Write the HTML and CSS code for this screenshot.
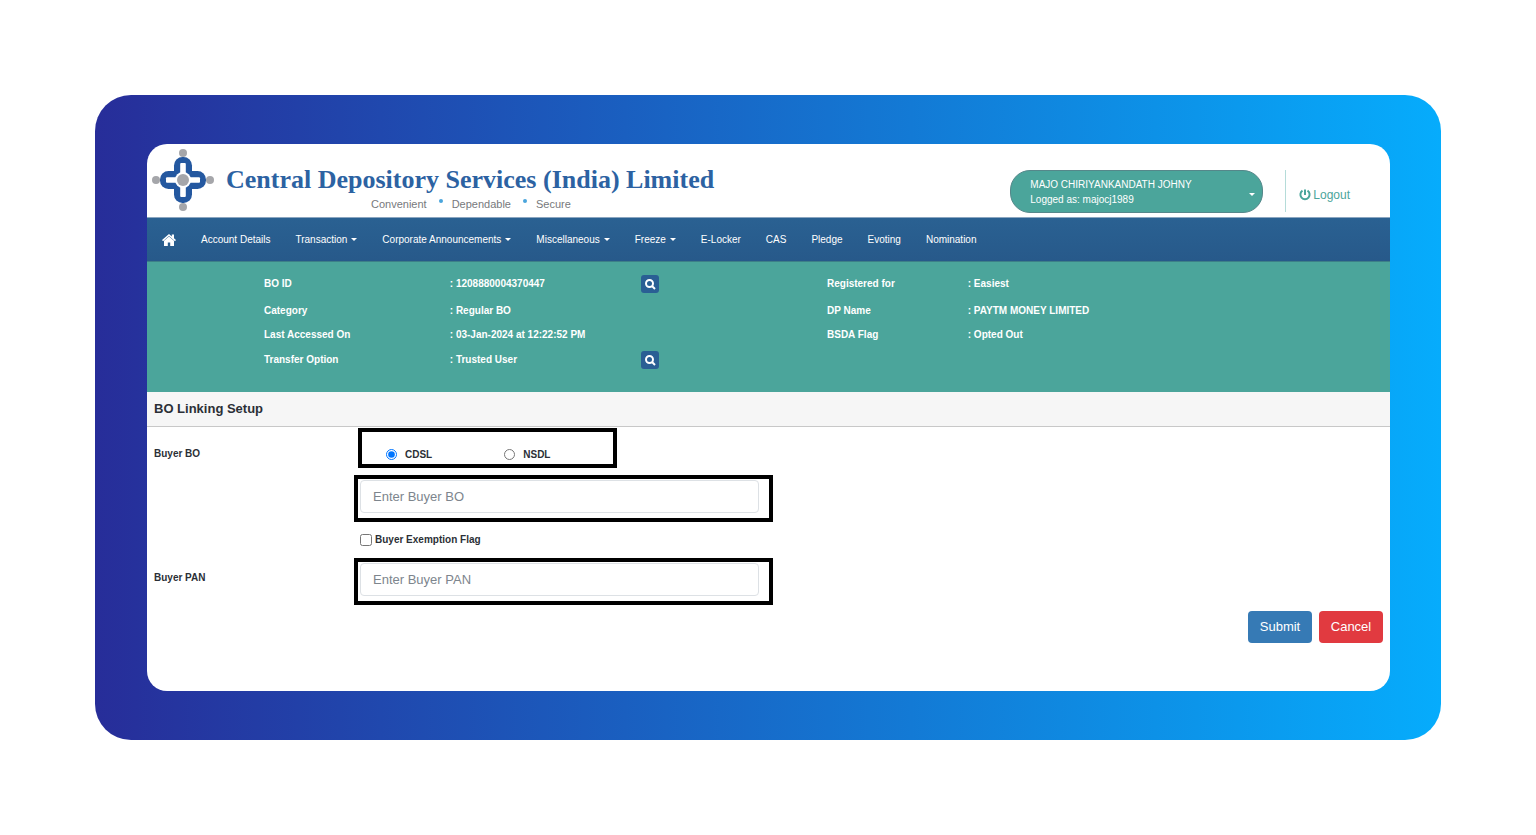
FILE: index.html
```html
<!DOCTYPE html>
<html lang="en">
<head>
    <meta charset="UTF-8">
    <meta name="viewport" content="width=device-width, initial-scale=1.0">
    <title>BO Linking Setup</title>
    <link rel="stylesheet" href="styles.css">
</head>
<body>
<div class="frame">
    <div class="card">
        <header class="header">
            <svg class="logo" viewBox="-32 -32 64 64" aria-hidden="true">
                <g fill="#2458a0">
                    <rect x="-9" y="-23" width="18" height="46" rx="8.500"/>
                    <rect x="-23" y="-9" width="46" height="18" rx="8.500"/>
                    <circle r="12.500"/>
                </g>
                <g fill="#fff">
                    <rect x="-2.800" y="-17" width="5.600" height="34" rx="1"/>
                    <rect x="-17" y="-2.800" width="34" height="5.600" rx="1"/>
                    <circle r="8"/>
                </g>
                <g fill="#a5a6aa">
                    <circle r="6"/>
                    <circle cx="-27" r="4"/>
                    <circle cx="27" r="4"/>
                    <circle cy="-27" r="4"/>
                    <circle cy="27" r="4"/>
                </g>
            </svg>
            <div class="brand">
                <div class="brand-name">Central Depository Services (India) Limited</div>
                <div class="tagline">
                    <span>Convenient</span><i class="dot"></i><span>Dependable</span><i class="dot"></i><span>Secure</span>
                </div>
            </div>
            <button type="button" class="user">
                <span>MAJO CHIRIYANKANDATH JOHNY<br>Logged as: majocj1989</span>
                <i class="caret"></i>
            </button>
            <div class="logout-wrap">
                <a href="#" class="logout">
                    <svg viewBox="0 0 12 12" width="12" height="12" fill="none" stroke="currentColor" stroke-width="2" aria-hidden="true"><path d="M3.500 1.700a4.600 4.600 0 1 0 5 0M6 .4v5.600"/></svg>
                    Logout
                </a>
            </div>
        </header>

        <nav class="nav">
            <a href="#" aria-label="Home"><svg class="home" viewBox="0 0 14 12" fill="#fff" aria-hidden="true"><path d="M7 0 0 6l1 1.200L7 2l6 5.200L14 6l-2-1.700V.6H9.800v1.800Z"/><path d="M7 2.500 2 6.800V12h3.800V8.500h2.400V12H12V6.800Z"/></svg></a>
            <a href="#">Account Details</a>
            <a href="#">Transaction<i class="caret"></i></a>
            <a href="#">Corporate Announcements<i class="caret"></i></a>
            <a href="#">Miscellaneous<i class="caret"></i></a>
            <a href="#">Freeze<i class="caret"></i></a>
            <a href="#">E-Locker</a>
            <a href="#">CAS</a>
            <a href="#">Pledge</a>
            <a href="#">Evoting</a>
            <a href="#">Nomination</a>
        </nav>

        <section class="info">
            <span>BO ID</span>
            <span>: 1208880004370447</span>
            <button type="button" class="search" aria-label="Search"><svg viewBox="0 0 12 12" width="12" height="12" fill="none" stroke="#fff" stroke-width="2" aria-hidden="true"><circle cx="5.500" cy="5.500" r="3.500"/><path d="m8 8 3 3"/></svg></button>
            <span>Registered for</span>
            <span>: Easiest</span>

            <span>Category</span>
            <span>: Regular BO</span>
            <span></span>
            <span>DP Name</span>
            <span>: PAYTM MONEY LIMITED</span>

            <span>Last Accessed On</span>
            <span>: 03-Jan-2024 at 12:22:52 PM</span>
            <span></span>
            <span>BSDA Flag</span>
            <span>: Opted Out</span>

            <span>Transfer Option</span>
            <span>: Trusted User</span>
            <button type="button" class="search" aria-label="Search"><svg viewBox="0 0 12 12" width="12" height="12" fill="none" stroke="#fff" stroke-width="2" aria-hidden="true"><circle cx="5.500" cy="5.500" r="3.500"/><path d="m8 8 3 3"/></svg></button>
        </section>

        <h1 class="title">BO Linking Setup</h1>

        <form class="form">
            <div class="row">
                <label for="buyerBo" class="name">Buyer BO</label>
                <div class="fields">
                    <div class="box radios">
                        <label><input type="radio" name="depository" checked>CDSL</label>
                        <label><input type="radio" name="depository">NSDL</label>
                    </div>
                    <div class="box">
                        <input type="text" id="buyerBo" placeholder="Enter Buyer BO">
                    </div>
                    <label class="flag"><input type="checkbox">Buyer Exemption Flag</label>
                </div>
            </div>
            <div class="row">
                <label for="buyerPan" class="name">Buyer PAN</label>
                <div class="fields">
                    <div class="box">
                        <input type="text" id="buyerPan" placeholder="Enter Buyer PAN">
                    </div>
                </div>
            </div>
            <div class="actions">
                <button type="button" class="btn submit">Submit</button>
                <button type="button" class="btn cancel">Cancel</button>
            </div>
        </form>
    </div>
</div>
</body>
</html>
```
FILE: styles.css
```css
* {
    box-sizing: border-box;
}
body {
    margin: 0;
    padding: 95px;
    background-color: #fff;
    color: #2b2f36;
    font-family: "Liberation Sans", Arial, sans-serif;
    font-size: 10px;
    line-height: 16px;
}
a {
    color: inherit;
    text-decoration: none;
}
button {
    border: none;
    font-family: inherit;
    cursor: pointer;
}
.frame {
    padding: 49px 51px 49px 52px;
    border-radius: 36px;
    background: linear-gradient(90deg, #272d99, #06acfc);
}
.card {
    overflow: hidden;
    padding-bottom: 48px;
    border-radius: 20px;
    background-color: #fff;
}

/* header */
.header {
    display: flex;
    align-items: flex-start;
    height: 74px;
    padding: 4px 40px 0 4px;
    border-bottom: 1px solid #8ba6c0;
}
.logo {
    flex: none;
    width: 64px;
    height: 64px;
}
.brand {
    padding: 15px 0 0 11px;
    white-space: nowrap;
}
.brand-name {
    color: #2c62a2;
    font-family: "Liberation Serif", "Times New Roman", serif;
    font-size: 26px;
    font-weight: bold;
    line-height: 33px;
}
.tagline {
    display: flex;
    padding-left: 145px;
    color: #77797c;
    font-size: 11px;
    line-height: 16px;
}
.dot {
    width: 4px;
    height: 4px;
    margin: 3px 9px 0 12px;
    border-radius: 2px;
    background-color: #4aa5dc;
}
.caret {
    display: inline-block;
    border: 3px solid transparent;
    border-top-color: currentColor;
    border-bottom: none;
}
.user {
    display: flex;
    align-items: center;
    justify-content: space-between;
    width: 253px;
    height: 43px;
    margin: 22px 22px 0 auto;
    padding: 0 7px 0 19px;
    border: 1px solid #55878a;
    border-radius: 20px;
    background-color: #4ba59b;
    color: #fff;
    font-size: 10px;
    line-height: 15px;
    text-align: left;
}
.user .caret {
    margin-top: 6px;
}
.logout-wrap {
    height: 42px;
    margin-top: 22px;
    padding: 17px 0 0 13px;
    border-left: 1px solid #b5dcd9;
}
.logout {
    display: flex;
    align-items: center;
    gap: 2px;
    color: #4ba59b;
    font-size: 12px;
}

/* menu */
.nav {
    display: flex;
    align-items: center;
    gap: 25px;
    height: 43px;
    padding: 0 15px;
    background: linear-gradient(#2a6192, #27598a);
    color: #fff;
    white-space: nowrap;
}
.home {
    display: block;
    width: 14px;
    height: 12px;
}
.nav .caret {
    margin-left: 4px;
    vertical-align: middle;
}

/* account details */
.info {
    display: grid;
    grid-template-columns: 33fr 34fr 33fr 25fr 75fr;
    grid-template-rows: 30px 24px 24px 26px;
    align-items: center;
    padding: 7px 0 19px 117px;
    border-top: 1px solid #3d8088;
    background-color: #4ba59b;
    color: #fff;
    font-weight: bold;
}
.search {
    display: flex;
    align-items: center;
    justify-content: center;
    width: 18px;
    height: 18px;
    padding: 0;
    border-radius: 3px;
    background-color: #2a5f94;
}

.title {
    margin: 0;
    padding: 8px 7px 9px;
    border-bottom: 1px solid #c8c8c8;
    background-color: #f6f6f6;
    font-size: 13px;
    line-height: 17px;
}

/* form */
.form {
    padding: 1px 7px 0;
    font-weight: bold;
}
.row {
    display: flex;
}
.name {
    width: 200px;
    padding-top: 18px;
}
.row + .row {
    margin-top: 10px;
}
.row + .row .name {
    padding-top: 12px;
}
.box {
    width: 419px;
    padding: 1px 10px 5px 2px;
    border: 4px solid #000;
}
.radios {
    display: flex;
    gap: 72px;
    width: 259px;
    height: 40px;
    margin: 0 0 7px 4px;
    padding: 13px 0 0 24px;
}
.radios label,
.flag {
    display: flex;
    align-items: center;
}
.radios input {
    width: 11px;
    height: 11px;
    margin: 0 8px 0 0;
}
.flag {
    margin: 10px 0 0 6px;
}
.flag input {
    width: 12px;
    height: 12px;
    margin: 0 3px 0 0;
}
.box input[type="text"] {
    display: block;
    width: 100%;
    height: 33px;
    padding: 0 12px;
    border: 1px solid #dde1e5;
    border-radius: 4px;
    background-color: #fff;
    font-family: inherit;
    font-size: 13px;
}
.box input::placeholder {
    color: #7d858d;
}
.actions {
    display: flex;
    justify-content: flex-end;
    gap: 7px;
    margin-top: 6px;
}
.btn {
    width: 64px;
    height: 32px;
    padding: 0 0 2px;
    border-radius: 4px;
    color: #fff;
    font-size: 13px;
}
.submit {
    background-color: #367ab5;
}
.cancel {
    background-color: #e13a40;
}
```
